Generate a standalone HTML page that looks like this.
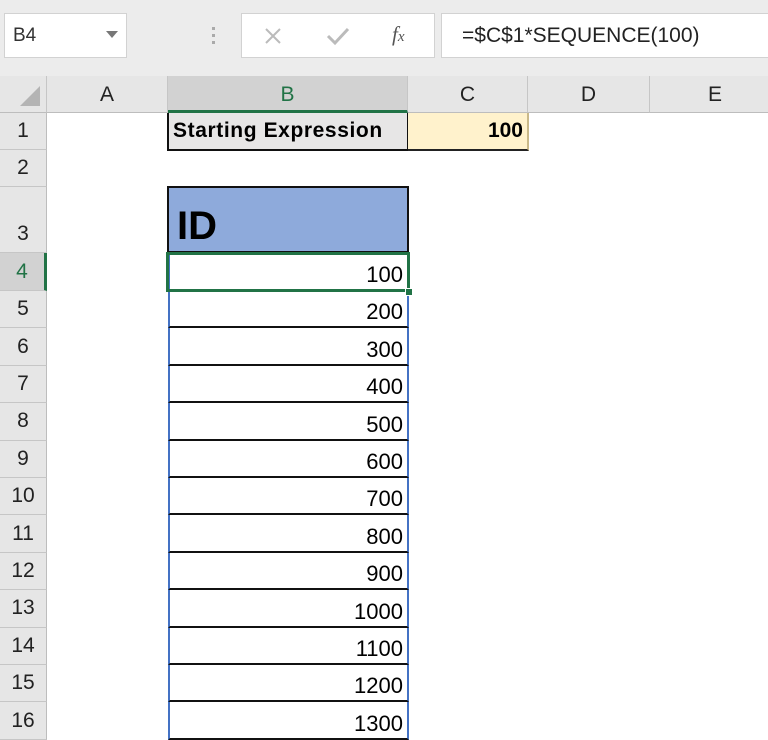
<!DOCTYPE html>
<html><head><style>
*{margin:0;padding:0;box-sizing:border-box}
body{width:768px;height:736px;overflow:hidden;background:#fff;font-family:"Liberation Sans",sans-serif;position:relative}
.a{position:absolute}
.tb{left:0;top:0;width:768px;height:76px;background:#ececec}
.box{background:#fff;border:1px solid #d2d2d2}
.ch{top:76px;height:37px;background:#e6e6e6;border-right:1px solid #c6c6c6;border-bottom:1px solid #bdbdbd;text-align:center;font-size:21px;line-height:37px;color:#222}
.rh{left:0;width:47px;background:#e6e6e6;border-bottom:1px solid #c6c6c6;border-right:1px solid #bdbdbd;text-align:center;font-size:21px;color:#222;display:flex;align-items:center;justify-content:center}
.num{left:168px;width:241px;border-left:2px solid #4472c4;border-right:2px solid #4472c4;border-bottom:2px solid #111;text-align:right;padding-right:4px;font-size:22px;color:#000;display:flex;align-items:flex-end;justify-content:flex-end;padding-bottom:1px}
</style></head><body>
<div class="a tb"></div>
<div class="a box" style="left:4px;top:13px;width:123px;height:45px;font-size:19px;line-height:43px;padding-left:8px;color:#333">B4</div>
<div class="a" style="left:106px;top:31px;width:0;height:0;border-left:6px solid transparent;border-right:6px solid transparent;border-top:7px solid #777"></div>
<div class="a" style="left:212px;top:27px;width:3px;height:3px;background:#aaa;box-shadow:0 7px #aaa,0 14px #aaa"></div>
<div class="a box" style="left:241px;top:13px;width:194px;height:45px"></div>
<svg class="a" style="left:263px;top:26px" width="20" height="20"><path d="M3 3L17 17M17 3L3 17" stroke="#bbb" stroke-width="2"/></svg>
<svg class="a" style="left:325px;top:25px" width="26" height="22"><path d="M3 11L10 18L23 4" stroke="#bbb" stroke-width="3" fill="none"/></svg>
<div class="a" style="left:392px;top:22px;font-family:'Liberation Serif',serif;font-style:italic;font-size:21px;color:#555">f<span style="font-size:15px">x</span></div>
<div class="a box" style="left:441px;top:13px;width:340px;height:45px;font-size:21px;line-height:43px;padding-left:20px;color:#222">=$C$1*SEQUENCE(100)</div>

<div class="a ch" style="left:0;width:47px"></div>
<svg class="a" style="left:18px;top:84px" width="24" height="24"><path d="M22 2L22 22L2 22Z" fill="#b4b4b4"/></svg>
<div class="a ch" style="left:47px;width:121px">A</div>
<div class="a ch" style="left:168px;width:240px;background:#d2d2d2;border-bottom:3px solid #217346;color:#217346;line-height:37px">B</div>
<div class="a ch" style="left:408px;width:120px">C</div>
<div class="a ch" style="left:528px;width:122px">D</div>
<div class="a ch" style="left:650px;width:130px;border-right:none">E</div>

<div class="a rh" style="top:113px;height:37px">1</div>
<div class="a rh" style="top:150px;height:37px">2</div>
<div class="a rh" style="top:187px;height:66px;align-items:flex-end;padding-bottom:6px">3</div>
<div class="a rh" style="top:253px;height:38px;background:#d2d2d2;color:#217346;border-right:3px solid #217346">4</div>
<div class="a rh" style="top:291px;height:37.4px">5</div>
<div class="a rh" style="top:328.4px;height:37.4px">6</div>
<div class="a rh" style="top:365.8px;height:37.4px">7</div>
<div class="a rh" style="top:403.2px;height:37.4px">8</div>
<div class="a rh" style="top:440.6px;height:37.4px">9</div>
<div class="a rh" style="top:478px;height:37.4px">10</div>
<div class="a rh" style="top:515.4px;height:37.4px">11</div>
<div class="a rh" style="top:552.8px;height:37.4px">12</div>
<div class="a rh" style="top:590.2px;height:37.4px">13</div>
<div class="a rh" style="top:627.6px;height:37.4px">14</div>
<div class="a rh" style="top:665px;height:37.4px">15</div>
<div class="a rh" style="top:702.4px;height:37.4px">16</div>

<div class="a" style="left:167px;top:113px;width:242px;height:38px;border:2px solid #111;border-top:none;background:#e7e6e6;font-weight:bold;font-size:21px;letter-spacing:0.6px;line-height:36px;padding-left:4px;white-space:nowrap;overflow:hidden">Starting Expression</div>
<div class="a" style="left:408px;top:113px;width:121px;height:38px;border:2px solid #222;border-left:none;border-top:none;border-right-color:#c9b98a;background:#fff2cc;font-weight:bold;font-size:21px;line-height:36px;text-align:right;padding-right:4px">100</div>

<div class="a" style="left:167px;top:186px;width:242px;height:67px;border:2px solid #111;background:#8eaadb;font-weight:bold;font-size:40px;line-height:76px;padding-left:8px">ID</div>

<div class="a num" style="top:253px;height:38px">100</div>
<div class="a num" style="top:291px;height:37.4px">200</div>
<div class="a num" style="top:328.4px;height:37.4px">300</div>
<div class="a num" style="top:365.8px;height:37.4px">400</div>
<div class="a num" style="top:403.2px;height:37.4px">500</div>
<div class="a num" style="top:440.6px;height:37.4px">600</div>
<div class="a num" style="top:478px;height:37.4px">700</div>
<div class="a num" style="top:515.4px;height:37.4px">800</div>
<div class="a num" style="top:552.8px;height:37.4px">900</div>
<div class="a num" style="top:590.2px;height:37.4px">1000</div>
<div class="a num" style="top:627.6px;height:37.4px">1100</div>
<div class="a num" style="top:665px;height:37.4px">1200</div>
<div class="a num" style="top:702.4px;height:37.4px">1300</div>

<div class="a" style="left:166px;top:252px;width:244px;height:40px;border:3px solid #217346"></div>
<div class="a" style="left:405px;top:288px;width:8px;height:8px;background:#217346;border:1px solid #fff"></div>
</body></html>
